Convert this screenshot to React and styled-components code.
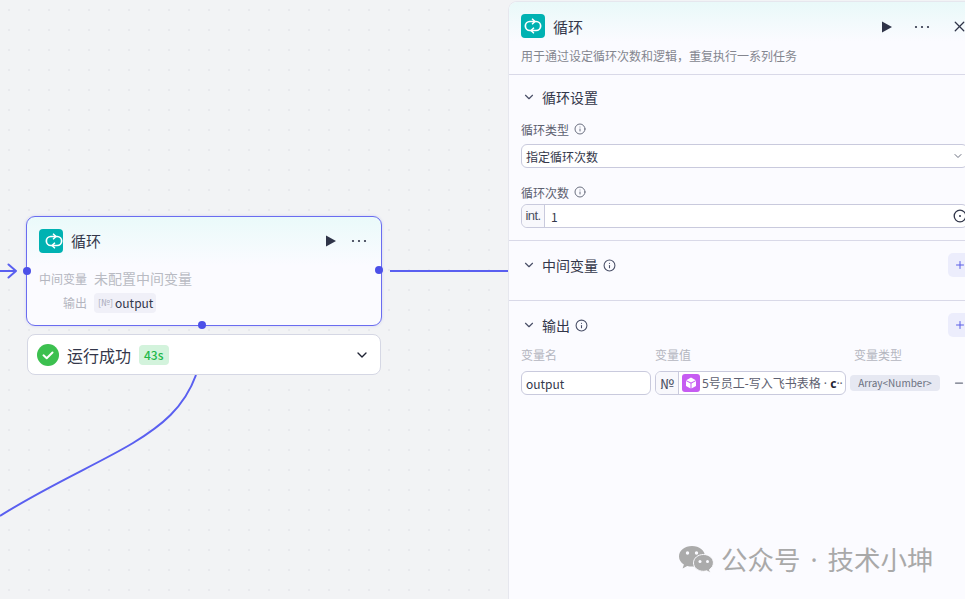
import styled, { createGlobalStyle } from "styled-components";
import { ChevronDown, Info, Plus, Minus, X } from "lucide-react";

const GlobalStyle = createGlobalStyle`
    html, body { margin: 0; padding: 0; height: 100%; overflow: hidden; background: #f2f3f5; }
    body { font-family: "Noto Sans CJK SC", "Noto Sans", sans-serif; }
    * { box-sizing: border-box; }
`;

function LoopIcon({ size }) {
    return (
        <LoopBox $size={size}>
            <svg width="18" height="18" viewBox="0 0 16 16" fill="none" stroke="#fff" strokeWidth="1.5" strokeLinecap="round" strokeLinejoin="round">
                <path d="M5.800 12H5.200A4 4 0 0 1 5.200 4H9.400" />
                <path d="M7.600 2 9.700 4 7.600 6" />
                <path d="M10.200 4H10.800A4 4 0 0 1 10.800 12H6.600" />
                <path d="M8.400 10 6.300 12 8.400 14" />
            </svg>
        </LoopBox>
    );
}

function PlayIcon() {
    return (
        <svg width="12" height="12" viewBox="0 0 12 12"><path d="M1 0.600 11 6 1 11.400Z" fill="#2f3448" /></svg>
    );
}

function DotsIcon() {
    return (
        <svg width="16" height="4" viewBox="0 0 16 4" fill="#2f3448">
            <circle cx="2" cy="2" r="1.100" /><circle cx="8" cy="2" r="1.100" /><circle cx="14" cy="2" r="1.100" />
        </svg>
    );
}

function WeChatIcon() {
    return (
        <svg width="36" height="30" viewBox="0 0 36 30">
            <path d="M14 1C6.800 1 1 5.600 1 11.400c0 3.300 1.900 6.200 4.900 8.100L4.600 23.400l4.600-2.400c1.500.4 3.100.6 4.800.6 6.800 0 13-4.500 13-10.200C27 5.600 21.200 1 14 1Z" fill="#ababab" />
            <path d="M25.500 9.500c-5.600 0-10 3.700-10 8.400s4.400 8.400 10 8.400c1.100 0 2.200-.2 3.200-.5l3.800 2.200-1-3.500c2.300-1.500 3.900-3.900 3.900-6.600C35.500 13.200 31.100 9.500 25.500 9.500Z" fill="#ababab" stroke="#fbfbff" strokeWidth="1" />
            <circle cx="9.500" cy="8" r="1.700" fill="#fbfbff" /><circle cx="18.500" cy="8" r="1.700" fill="#fbfbff" />
            <circle cx="22" cy="16.500" r="1.500" fill="#fbfbff" /><circle cx="29.500" cy="16.500" r="1.500" fill="#fbfbff" />
        </svg>
    );
}

function TargetIcon() {
    return (
        <TargetWrap>
            <svg width="14" height="14" viewBox="0 0 14 14" fill="none" stroke="#2f3448" strokeWidth="1.300">
                <circle cx="7" cy="7" r="5.800" />
                <circle cx="7" cy="7" r="1" fill="#2f3448" stroke="none" />
            </svg>
        </TargetWrap>
    );
}

export default function App() {
    return (
        <Page>
            <GlobalStyle />
            <Canvas>
                <Edges width="509" height="599" viewBox="0 0 509 599" fill="none" stroke="#5a5ff0" strokeWidth="2">
                    <path d="M0 271H16M8.500 264.500 16 271 8.500 277.500" strokeLinejoin="round" strokeLinecap="round" />
                    <path d="M390 271H509" />
                    <path d="M196 375C184 408 161 426 133 443 100 463 45 487 0 516" />
                </Edges>
                <NodeCard>
                    <NodeHeader>
                        <LoopIcon size={24} />
                        <NodeTitle>循环</NodeTitle>
                        <PlayIcon />
                        <DotsIcon />
                    </NodeHeader>
                    <NodeRow>
                        <NodeKey>中间变量</NodeKey>
                        <NodeEmpty>未配置中间变量</NodeEmpty>
                    </NodeRow>
                    <NodeRow>
                        <NodeKey>输出</NodeKey>
                        <OutputChip><small>[№]</small>output</OutputChip>
                    </NodeRow>
                    <Handle $side="left" />
                    <Handle $side="right" />
                    <Handle $side="bottom" />
                </NodeCard>
                <StatusCard>
                    <svg width="22" height="22" viewBox="0 0 22 22">
                        <circle cx="11" cy="11" r="11" fill="#3cc04f" />
                        <path d="M6.500 11.300 9.700 14.200 15.500 8.500" fill="none" stroke="#fff" strokeWidth="2" strokeLinecap="round" strokeLinejoin="round" />
                    </svg>
                    <StatusText>运行成功</StatusText>
                    <TimeTag>43s</TimeTag>
                    <StatusChevron><ChevronDown size={16} color="#1f2333" /></StatusChevron>
                </StatusCard>
            </Canvas>
            <Panel>
                <PanelHeader>
                    <PanelTitleRow>
                        <LoopIcon size={24} />
                        <PanelTitle>循环</PanelTitle>
                        <PanelActions>
                            <PlayIcon />
                            <DotsIcon />
                            <X size={17} color="#2f3448" strokeWidth={1.800} />
                        </PanelActions>
                    </PanelTitleRow>
                    <PanelDesc>用于通过设定循环次数和逻辑，重复执行一系列任务</PanelDesc>
                </PanelHeader>
                <Section $height={166} $top={10}>
                    <SectionHead>
                        <ChevronDown size={14} color="#4a5068" />
                        <SectionTitle>循环设置</SectionTitle>
                    </SectionHead>
                    <FieldLabel $top={10} $bottom={5}>循环类型 <Info size={12} color="#6b7080" /></FieldLabel>
                    <SelectBox>指定循环次数<ChevronDown size={12} color="#6b7080" /></SelectBox>
                    <FieldLabel $top={14} $bottom={2}>循环次数 <Info size={12} color="#6b7080" /></FieldLabel>
                    <InputBox>
                        <InputPrefix>int.</InputPrefix>
                        <InputValue>1</InputValue>
                        <TargetIcon />
                    </InputBox>
                </Section>
                <Section $height={60} $top={12}>
                    <SectionHead>
                        <ChevronDown size={14} color="#4a5068" />
                        <SectionTitle>中间变量</SectionTitle>
                        <Info size={13} color="#4a5068" />
                        <AddButton><Plus size={12} color="#5b5ee6" /></AddButton>
                    </SectionHead>
                </Section>
                <Section $height={120} $top={12} $last>
                    <SectionHead>
                        <ChevronDown size={14} color="#4a5068" />
                        <SectionTitle>输出</SectionTitle>
                        <Info size={13} color="#4a5068" />
                        <AddButton><Plus size={12} color="#5b5ee6" /></AddButton>
                    </SectionHead>
                    <OutputGrid>
                        <ColHead>变量名</ColHead>
                        <ColHead>变量值</ColHead>
                        <ColHead $indent>变量类型</ColHead>
                        <span />
                        <NameInput>output</NameInput>
                        <ValueBox>
                            <ValuePrefix>№</ValuePrefix>
                            <ValueBody>
                                <CubeBox>
                                    <svg width="12" height="12" viewBox="0 0 12 12" fill="#fff">
                                        <path d="M6 .6 10.800 3.200 6 5.600 1.200 3.200Z" />
                                        <path d="M1 4.100 5.500 6.400V11.400L1 8.900Z" />
                                        <path d="M11 4.100 6.500 6.400V11.400L11 8.900Z" />
                                    </svg>
                                </CubeBox>
                                <ValueText>5号员工-写入飞书表格 · <b>c</b>··</ValueText>
                            </ValueBody>
                        </ValueBox>
                        <TypeTag>Array&lt;Number&gt;</TypeTag>
                        <RemoveButton><Minus size={12} color="#6b7080" strokeWidth={2.500} /></RemoveButton>
                    </OutputGrid>
                </Section>
                <Watermark>
                    <WeChatIcon />
                    <span>公众号 · 技术小坤</span>
                </Watermark>
            </Panel>
        </Page>
    );
}

const Page = styled.div`
    display: flex;
    width: 965px;
    height: 599px;
    overflow: hidden;
`;

const Canvas = styled.div`
    position: relative;
    flex: 0 0 508px;
    height: 599px;
    background-color: #f2f3f5;
    background-image: radial-gradient(circle, #e8e9ed 1px, transparent 1.200px);
    background-size: 20px 20px;
    background-position: -1px 0;
`;

const Edges = styled.svg`
    position: absolute;
    left: 0;
    top: 0;
`;

const NodeCard = styled.div`
    position: absolute;
    left: 26px;
    top: 216px;
    width: 356px;
    height: 110px;
    border: 1px solid #6a6cf0;
    border-radius: 9px;
    background: linear-gradient(180deg, #eafafa 0%, #fbfbff 45%);
    box-shadow: 0 0 3px rgba(90, 94, 230, 0.25);
    padding: 12px 12px 0;
`;

const NodeHeader = styled.div`
    display: flex;
    align-items: center;
    gap: 8px;
    height: 24px;
    padding-right: 2px;
    margin-bottom: 13px;
    svg:last-child { margin-left: 6px; }
`;

const LoopBox = styled.div`
    width: ${(p) => p.$size}px;
    height: ${(p) => p.$size}px;
    flex: none;
    border-radius: 4px;
    background: #00b2b2;
    display: flex;
    align-items: center;
    justify-content: center;
`;

const NodeTitle = styled.div`
    flex: 1;
    font-size: 15px;
    color: #33374a;
    line-height: 24px;
`;

const NodeRow = styled.div`
    display: flex;
    align-items: center;
    gap: 7px;
    height: 24.500px;
`;

const NodeKey = styled.div`
    width: 48px;
    text-align: right;
    font-size: 12px;
    color: #b4b6c0;
`;

const NodeEmpty = styled.div`
    font-size: 14px;
    color: #b9bbc3;
`;

const OutputChip = styled.div`
    display: flex;
    align-items: center;
    gap: 2px;
    height: 20px;
    padding: 0 3px 0 4px;
    border-radius: 4px;
    background: #f0f0f8;
    font-size: 12px;
    color: #33374a;
    small { font-size: 9px; color: #a8aaba; }
`;

const handleSpots = {
    left: "left: -4px; top: 50px;",
    right: "right: -2px; top: 49px;",
    bottom: "left: 171px; bottom: -4px;",
};

const Handle = styled.span`
    position: absolute;
    width: 8px;
    height: 8px;
    border-radius: 50%;
    background: #4c50e8;
    ${(p) => handleSpots[p.$side]}
`;

const StatusCard = styled.div`
    position: absolute;
    left: 27px;
    top: 334px;
    width: 354px;
    height: 41px;
    display: flex;
    align-items: center;
    padding: 0 10px 0 9px;
    background: #fff;
    border: 1px solid #d5d7e4;
    border-radius: 8px;
`;

const StatusText = styled.div`
    margin-left: 8px;
    font-size: 16px;
    color: #33374a;
`;

const TimeTag = styled.div`
    margin-left: 8px;
    height: 20px;
    line-height: 20px;
    padding: 0 6px 0 5px;
    border-radius: 4px;
    background: #d3f3dc;
    color: #1fb84a;
    font-size: 12px;
    font-weight: 500;
`;

const StatusChevron = styled.div`
    margin-left: auto;
    display: flex;
`;

const Panel = styled.div`
    position: relative;
    flex: 0 0 480px;
    margin-top: 2px;
    height: 597px;
    background: #fbfbff;
    border-top-left-radius: 8px;
    box-shadow: -1px 0 0 #e6e7ee, 0 -1px 0 #e6e7ee;
    margin-left: 1px;
`;

const PanelHeader = styled.div`
    height: 73px;
    padding: 12px 12px 0;
    background: linear-gradient(180deg, #e9f9f9 0%, #fbfbff 55%);
    border-bottom: 1px solid #d9d9e8;
    border-top-left-radius: 8px;
`;

const PanelTitleRow = styled.div`
    display: flex;
    align-items: center;
    gap: 8px;
    height: 24px;
`;

const PanelTitle = styled.div`
    font-size: 15px;
    color: #33374a;
`;

const PanelActions = styled.div`
    position: absolute;
    left: 372px;
    top: 16px;
    display: flex;
    align-items: center;
    gap: 21px;
`;

const PanelDesc = styled.div`
    margin-top: 9px;
    font-size: 12px;
    line-height: 18px;
    color: #84868f;
`;

const Section = styled.div`
    height: ${(p) => p.$height}px;
    padding: ${(p) => p.$top}px 12px 0;
    border-bottom: ${(p) => (p.$last ? "none" : "1px solid #d9d9e8")};
`;

const SectionHead = styled.div`
    position: relative;
    display: flex;
    align-items: center;
    height: 24px;
    gap: 5px;
    svg:first-child { margin: 0 1px 0 1px; }
`;

const SectionTitle = styled.div`
    font-size: 14px;
    color: #33374a;
`;

const AddButton = styled.div`
    position: absolute;
    left: 427px;
    top: 0;
    width: 24px;
    height: 24px;
    border-radius: 5px;
    background: #ecedfc;
    display: flex;
    align-items: center;
    justify-content: center;
    svg:first-child { margin: 0; }
`;

const FieldLabel = styled.div`
    display: flex;
    align-items: center;
    gap: 5px;
    height: 20px;
    margin-top: ${(p) => p.$top}px;
    margin-bottom: ${(p) => p.$bottom}px;
    font-size: 12px;
    color: #5d6070;
`;

const SelectBox = styled.div`
    display: flex;
    align-items: center;
    justify-content: space-between;
    width: 447px;
    height: 24px;
    padding: 0 3px 0 4px;
    border: 1px solid #c9cadd;
    border-radius: 6px;
    background: #fff;
    font-size: 12px;
    color: #33374a;
`;

const InputBox = styled.div`
    display: flex;
    align-items: center;
    width: 447px;
    height: 24px;
    border: 1px solid #c9cadd;
    border-radius: 6px;
    background: #fff;
`;

const InputPrefix = styled.div`
    flex: none;
    width: 23px;
    height: 22px;
    line-height: 22px;
    text-align: center;
    border-right: 1px solid #c9cadd;
    border-radius: 6px 0 0 6px;
    background: #f8f8fc;
    font-family: "Liberation Sans", sans-serif;
    font-size: 13px;
    letter-spacing: -0.6px;
    color: #4a4e60;
`;

const InputValue = styled.div`
    flex: 1;
    padding-left: 6px;
    font-size: 12px;
    color: #33374a;
`;

const TargetWrap = styled.div`
    display: flex;
`;

const OutputGrid = styled.div`
    display: grid;
    grid-template-columns: 130px 191px 90px 25px;
    grid-template-rows: 27px 24px;
    column-gap: 4px;
    margin-top: 7px;
    align-items: center;
`;

const ColHead = styled.div`
    align-self: start;
    height: 22px;
    line-height: 22px;
    padding-left: ${(p) => (p.$indent ? "4px" : "0")};
    font-size: 12px;
    color: #b4b6c0;
`;

const NameInput = styled.div`
    height: 24px;
    line-height: 24px;
    padding-left: 4px;
    border: 1px solid #c9cadd;
    border-radius: 6px;
    background: #fff;
    font-size: 12px;
    color: #33374a;
`;

const ValueBox = styled.div`
    display: flex;
    align-items: center;
    height: 24px;
    border: 1px solid #c9cadd;
    border-radius: 6px;
    background: #fff;
    overflow: hidden;
`;

const ValuePrefix = styled.div`
    flex: none;
    width: 23px;
    height: 22px;
    line-height: 22px;
    text-align: center;
    border-right: 1px solid #c9cadd;
    background: #f8f8fc;
    font-size: 14px;
    color: #4a4e60;
`;

const ValueBody = styled.div`
    display: flex;
    align-items: center;
    gap: 2px;
    padding-left: 3px;
    min-width: 0;
`;

const CubeBox = styled.div`
    flex: none;
    width: 18px;
    height: 18px;
    border-radius: 3px;
    background: #c65cf2;
    display: flex;
    align-items: center;
    justify-content: center;
`;

const ValueText = styled.div`
    font-family: "Noto Sans", "Noto Sans CJK SC", sans-serif;
    font-size: 12px;
    color: #5d6070;
    white-space: nowrap;
    b { color: #1f2333; }
`;

const TypeTag = styled.div`
    height: 16px;
    line-height: 16px;
    text-align: center;
    border-radius: 4px;
    background: #e6e8f2;
    font-size: 10px;
    color: #6b7080;
`;

const RemoveButton = styled.div`
    display: flex;
    padding-left: 9px;
`;

const Watermark = styled.div`
    position: absolute;
    left: 169px;
    top: 543px;
    display: flex;
    align-items: center;
    gap: 7px;
    font-family: "Noto Sans", "Noto Sans CJK SC", sans-serif;
    font-size: 26.500px;
    word-spacing: 3px;
    line-height: 30px;
    color: #a9a9a9;
    white-space: nowrap;
`;
